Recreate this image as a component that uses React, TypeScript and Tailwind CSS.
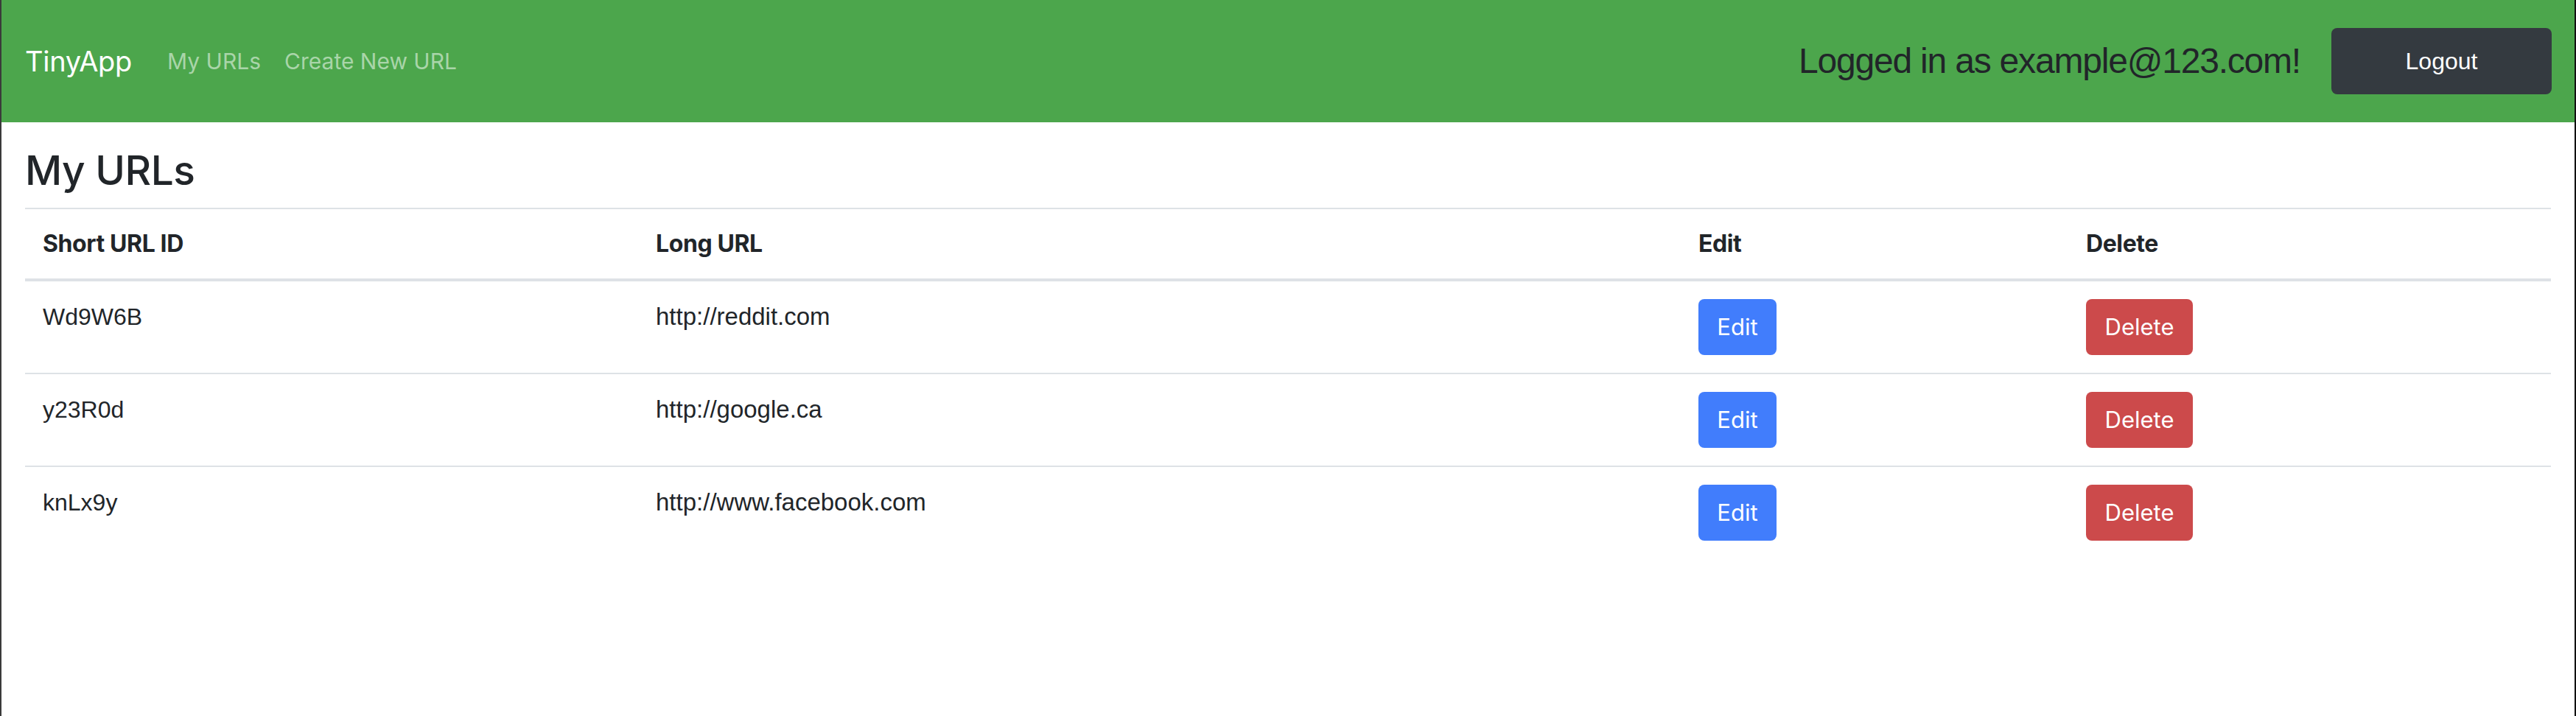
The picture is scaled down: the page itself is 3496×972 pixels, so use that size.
const urls = [
  { id: "Wd9W6B", longURL: "http://reddit.com" },
  { id: "y23R0d", longURL: "http://google.ca" },
  { id: "knLx9y", longURL: "http://www.facebook.com" },
];

const sf = "font-['Inter','Noto_Sans',sans-serif]";
const helv = "font-['Liberation_Sans','Arial',sans-serif]";

function Navbar() {
  return (
    <nav className="flex h-[166px] items-center justify-between bg-[#4ca64c] pl-[32px] pr-[31px]">
      <div className={`flex items-center ${sf}`}>
        <a href="#" className="text-[38px] leading-none tracking-[-0.3px] text-white">
          TinyApp
        </a>
        <a href="#" className="ml-[48px] text-[30px] leading-none text-[#a9d5a9]">
          My URLs
        </a>
        <a href="#" className="ml-[32px] text-[30px] leading-none text-[#a9d5a9]">
          Create New URL
        </a>
      </div>
      <div className="flex items-center gap-[42px]">
        <span className={`${helv} text-[48px] leading-none tracking-[-1.2px] text-[#212529]`}>
          Logged in as example@123.com!
        </span>
        <button
          type="button"
          className={`${helv} h-[90px] w-[299px] rounded-[8px] bg-[#343a40] text-[32px] text-white`}
        >
          Logout
        </button>
      </div>
    </nav>
  );
}

function UrlRow({ id, longURL }: { id: string; longURL: string }) {
  return (
    <tr className="border-b-2 border-[#dee2e6] last:border-b-0">
      <td className={`${helv} px-[24px] py-[24px] align-top text-[32px] leading-[48px] text-[#212529]`}>
        {id}
      </td>
      <td className={`${helv} px-[24px] py-[24px] align-top text-[33px] leading-[48px] text-[#212529]`}>
        {longURL}
      </td>
      <td className="px-[24px] py-[24px] align-top">
        <button
          type="button"
          className={`${sf} h-[76px] w-[106px] rounded-[8px] bg-[#417dfc] text-[31px] text-white`}
        >
          Edit
        </button>
      </td>
      <td className="px-[24px] py-[24px] align-top">
        <button
          type="button"
          className={`${sf} h-[76px] w-[145px] rounded-[8px] bg-[#cc4a4b] text-[31px] text-white`}
        >
          Delete
        </button>
      </td>
    </tr>
  );
}

export default function App() {
  return (
    <div className="min-h-[972px] border-l-2 border-r-2 border-l-[#3a3a3a] border-r-[#111] bg-white">
      <Navbar />
      <main className="px-[32px]">
        <h2 className={`${sf} pt-[32px] pb-[18px] text-[55px] font-medium leading-[66px] tracking-[-0.5px] text-[#212529]`}>
          My URLs
        </h2>
        <table className="w-full table-fixed border-t-2 border-[#dee2e6]">
          <colgroup>
            <col className="w-[832px]" />
            <col className="w-[1415px]" />
            <col className="w-[526px]" />
            <col />
          </colgroup>
          <thead>
            <tr className="border-b-4 border-[#dee2e6]">
              {["Short URL ID", "Long URL", "Edit", "Delete"].map((h) => (
                <th
                  key={h}
                  className={`${sf} px-[24px] py-[23px] text-left text-[32px] font-bold leading-[48px] tracking-[-0.4px] text-[#212529]`}
                >
                  {h}
                </th>
              ))}
            </tr>
          </thead>
          <tbody>
            {urls.map((u) => (
              <UrlRow key={u.id} id={u.id} longURL={u.longURL} />
            ))}
          </tbody>
        </table>
      </main>
    </div>
  );
}
